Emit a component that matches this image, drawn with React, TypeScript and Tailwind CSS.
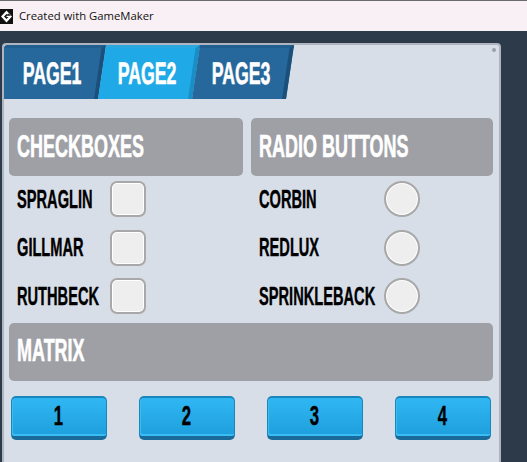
const display = "font-['Liberation_Sans',sans-serif] font-bold";

function Tab({ label, active, first }: { label: string; active?: boolean; first?: boolean }) {
  return (
    <div
      className={`h-[54px] shrink-0 -skew-x-[8.4deg] border-r-[4px] border-t-[3px] flex items-center justify-center ${first ? "w-[110px] -ml-[12px] pl-[14px]" : "w-[94px]"} ${active ? "bg-[#1fa9e6] border-r-[#1a8fc6] border-t-[#2aa8e0]" : "bg-[#27689c] border-r-[#1c4f7a] border-t-[#215f90]"}`}
    >
      <span className={`skew-x-[14.3deg] text-white text-[31px] leading-none inline-block scale-x-[0.57] [-webkit-text-stroke:0.6px_#ffffff] ${display}`}>{label}</span>
    </div>
  );
}

function SectionHeader({ label, className }: { label: string; className: string }) {
  return (
    <div className={`h-[58px] rounded-[5px] bg-[#9ea0a5] flex items-center pl-[8px] pb-[2px] ${className}`}>
      <span className={`text-white text-[31px] leading-none inline-block origin-left scale-x-[0.58] whitespace-nowrap [-webkit-text-stroke:0.6px_#ffffff] ${display}`}>{label}</span>
    </div>
  );
}

function Row({ label, round }: { label: string; round?: boolean }) {
  return (
    <div className="h-[48.5px] flex items-center pl-[8px]">
      <span className={`text-black text-[25px] leading-none inline-block origin-left scale-x-[0.585] whitespace-nowrap w-0 [-webkit-text-stroke:0.4px_#000000] ${display}`}>{label}</span>
      <div
        className={`h-[36px] w-[36px] border-2 border-[#a8a8a8] bg-[#eeeeee] shadow-[inset_0_0_0_1px_#ffffff] ${round ? "rounded-full ml-[125px]" : "rounded-[7px] ml-[93px]"}`}
      />
    </div>
  );
}

function MatrixButton({ label }: { label: string }) {
  return (
    <div className="w-[96px] h-[44px] rounded-[5px] border border-t-2 border-[#1a85b8] border-b-[4px] border-b-[#186a98] bg-gradient-to-b from-[#30b7f3] to-[#1d9fdc] shadow-[inset_1px_-2px_0_0_#3bbcf4] flex items-center justify-center">
      <span className={`text-black text-[27px] leading-none inline-block scale-x-[0.62] [-webkit-text-stroke:0.4px_#000000] ${display}`}>{label}</span>
    </div>
  );
}

export default function App() {
  return (
    <div className="w-[527px] h-[462px] overflow-hidden bg-[#2c3a4a] flex flex-col">
      <div className="h-[31px] shrink-0 bg-[#f8f0f5] border-t border-t-[#6b6b6b] flex items-center">
        <svg width="13" height="15" viewBox="0 0 13 15" className="shrink-0">
          <rect width="13" height="15" fill="#111" />
          <path d="M6.5 1.5 L12 7.5 L6.5 13.5 L1 7.5 L6.5 1.5 Z M6.5 5 L4 7.5 L6.5 10 L8.5 8 L6.5 8 L6.5 6.8 L11 6.8 L8.5 4.6 L7.6 5.6 Z" fill="#fff" fillRule="evenodd" />
        </svg>
        <span className="ml-[6px] text-[11.3px] leading-none text-[#111] font-['Open_Sans',sans-serif] whitespace-nowrap">Created with GameMaker</span>
      </div>
      <div className="mt-[12px] ml-[2px] w-[499px] flex-1 rounded-t-[4px] border-2 border-b-0 border-[#aeb4c0] bg-[#d8deE8] flex flex-col relative">
        <div className="absolute right-[3px] top-[3px] h-[4px] w-[4px] rounded-full bg-[#9aa0aa]" />
        <div className="w-[294px] h-[54px] overflow-hidden rounded-tl-[4px] flex">
          <Tab label="PAGE1" first />
          <Tab label="PAGE2" active />
          <Tab label="PAGE3" />
        </div>
        <div className="pl-[5px] pr-[6px] pt-[19px]">
          <div className="flex gap-[8px]">
            <div className="w-[234px] shrink-0">
              <SectionHeader label="CHECKBOXES" className="w-full" />
              <div className="mt-[-1.25px]">
                <Row label="SPRAGLIN" />
                <Row label="GILLMAR" />
                <Row label="RUTHBECK" />
              </div>
            </div>
            <div className="w-[242px] shrink-0">
              <SectionHeader label="RADIO BUTTONS" className="w-full" />
              <div className="mt-[-1.25px]">
                <Row label="CORBIN" round />
                <Row label="REDLUX" round />
                <Row label="SPRINKLEBACK" round />
              </div>
            </div>
          </div>
          <SectionHeader label="MATRIX" className="w-full mt-[2.5px]" />
          <div className="mt-[15px] pl-[2px] flex gap-[32px]">
            <MatrixButton label="1" />
            <MatrixButton label="2" />
            <MatrixButton label="3" />
            <MatrixButton label="4" />
          </div>
        </div>
      </div>
    </div>
  );
}
